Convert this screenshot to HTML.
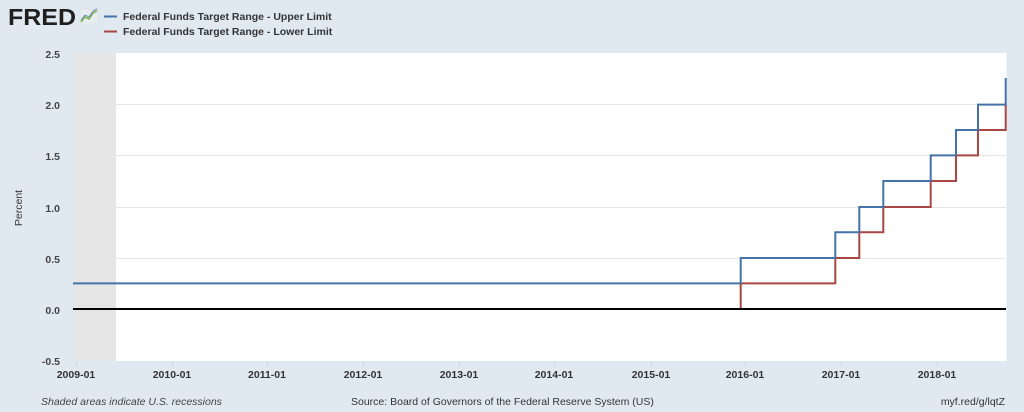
<!DOCTYPE html>
<html><head><meta charset="utf-8"><style>
html,body{margin:0;padding:0;background:#e1e9f0;}
svg{display:block;}
text{font-family:"Liberation Sans",sans-serif;}
</style></head><body>
<svg width="1024" height="412" viewBox="0 0 1024 412" xmlns="http://www.w3.org/2000/svg">
<rect width="1024" height="412" fill="#e1e9f0"/>
<text x="8" y="25" font-size="23" font-weight="bold" fill="#1f1f1f" textLength="68" lengthAdjust="spacingAndGlyphs">FRED</text>
<g>
<rect x="80" y="9" width="18" height="15" fill="#e8edf1" stroke="#d5dde4" stroke-width="0.5"/>
<polyline points="81,22 85,17 89,19 93,13 97,11" fill="none" stroke="#7bb04a" stroke-width="1.5"/>
<polyline points="81,20 85,15 89,17 93,11 97,9" fill="none" stroke="#6a8fbf" stroke-width="1"/>
</g>
<line x1="104" y1="16.5" x2="117" y2="16.5" stroke="#4572a7" stroke-width="2"/>
<line x1="104" y1="31.5" x2="117" y2="31.5" stroke="#aa4643" stroke-width="2"/>
<text x="123" y="20" font-size="10.5" font-weight="bold" fill="#333">Federal Funds Target Range - Upper Limit</text>
<text x="123" y="35" font-size="10.5" font-weight="bold" fill="#333">Federal Funds Target Range - Lower Limit</text>
<rect x="73" y="53" width="933.5" height="308" fill="#fff"/>
<rect x="73" y="53" width="43" height="308" fill="#e6e6e6"/>
<g stroke="#e6e6e6" stroke-width="1">
<line x1="116" y1="104.5" x2="1006" y2="104.5"/>
<line x1="116" y1="155.5" x2="1006" y2="155.5"/>
<line x1="116" y1="207.5" x2="1006" y2="207.5"/>
<line x1="116" y1="258.5" x2="1006" y2="258.5"/>
</g>
<g stroke="#c8d6e6" stroke-width="1">
<line x1="76.5" y1="361" x2="76.5" y2="366"/><line x1="172.5" y1="361" x2="172.5" y2="366"/>
<line x1="267.5" y1="361" x2="267.5" y2="366"/><line x1="363.5" y1="361" x2="363.5" y2="366"/>
<line x1="459.5" y1="361" x2="459.5" y2="366"/><line x1="554.5" y1="361" x2="554.5" y2="366"/>
<line x1="651.5" y1="361" x2="651.5" y2="366"/><line x1="745.5" y1="361" x2="745.5" y2="366"/>
<line x1="841.5" y1="361" x2="841.5" y2="366"/><line x1="937.5" y1="361" x2="937.5" y2="366"/>
</g>
<polyline fill="none" stroke="#aa4643" stroke-width="2" points="740.7,309 740.7,283.4 835.3,283.4 835.3,258 859.3,258 859.3,232.2 883.3,232.2 883.3,207 930.7,207 930.7,181 956,181 956,155.4 978,155.4 978,130 1005.7,130 1005.7,104.6"/>
<line x1="73" y1="309" x2="1006" y2="309" stroke="#000" stroke-width="2"/>
<polyline fill="none" stroke="#4572a7" stroke-width="2" points="73,283.4 740.7,283.4 740.7,258 835.3,258 835.3,232.2 859.3,232.2 859.3,207 883.3,207 883.3,181 930.7,181 930.7,155.4 956,155.4 956,130 978,130 978,104.6 1005.7,104.6 1005.7,78"/>
<g font-size="10.5" font-weight="bold" fill="#444" text-anchor="end">
<text x="60" y="58">2.5</text><text x="60" y="109">2.0</text><text x="60" y="160">1.5</text>
<text x="60" y="212">1.0</text><text x="60" y="263">0.5</text><text x="60" y="314">0.0</text><text x="60" y="365">-0.5</text>
</g>
<text transform="translate(22,208) rotate(-90)" font-size="10.5" fill="#333" text-anchor="middle">Percent</text>
<g font-size="10.5" font-weight="bold" fill="#333" text-anchor="middle">
<text x="76" y="378">2009-01</text><text x="172" y="378">2010-01</text><text x="267" y="378">2011-01</text>
<text x="363" y="378">2012-01</text><text x="459" y="378">2013-01</text><text x="554" y="378">2014-01</text>
<text x="651" y="378">2015-01</text><text x="745" y="378">2016-01</text><text x="841" y="378">2017-01</text>
<text x="937" y="378">2018-01</text>
</g>
<text x="41" y="405" font-size="10.5" font-style="italic" fill="#444">Shaded areas indicate U.S. recessions</text>
<text x="351" y="405" font-size="10.5" fill="#333">Source: Board of Governors of the Federal Reserve System (US)</text>
<text x="1005" y="405" font-size="10.5" fill="#333" text-anchor="end">myf.red/g/lqtZ</text>
</svg>
</body></html>
